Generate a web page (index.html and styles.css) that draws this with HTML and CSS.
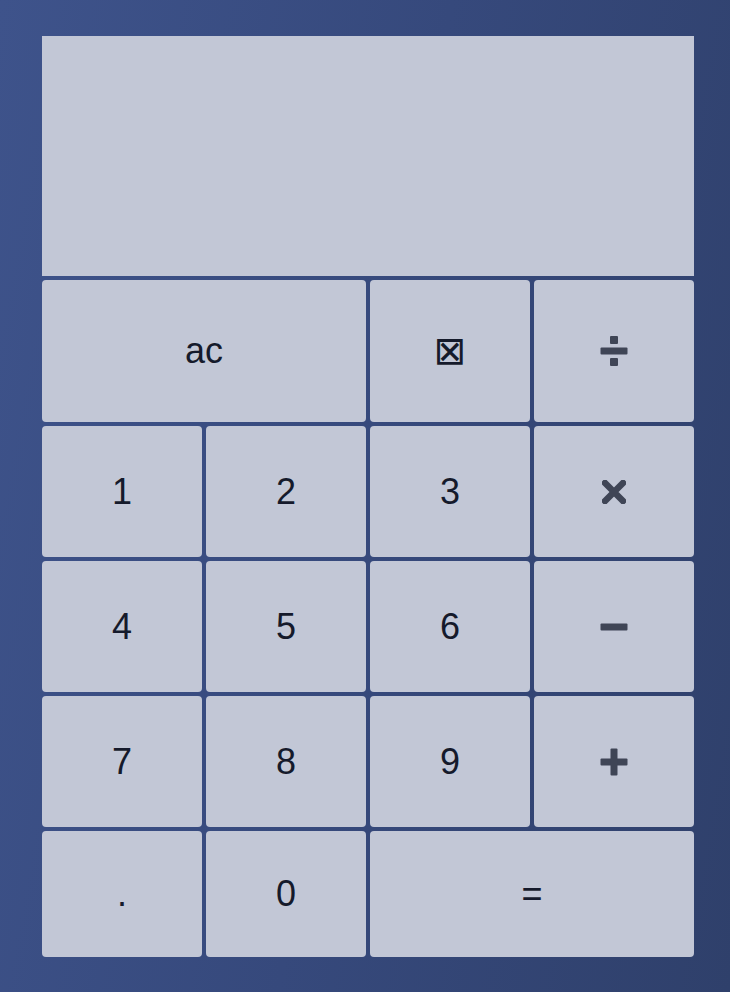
FILE: index.html
```html
<!DOCTYPE html>
<html lang="en">
<head>
    <meta charset="UTF-8">
    <meta name="viewport" content="width=device-width, initial-scale=1.0">
    <title>Calculator</title>
    <link rel="stylesheet" href="styles.css">
</head>
<body>
    <div class="calculator">
        <div class="display" id="display"></div>
        <div class="keys">
            <button class="key wide" data-action="clear">ac</button>
            <button class="key symbol" data-action="delete">&#8864;</button>
            <button class="key op" data-op="/" aria-label="divide">
                <svg width="28" height="30" viewBox="0 0 28 30">
                    <rect x="10" y="0" width="8" height="8" rx="1"/>
                    <rect x="0.5" y="11.5" width="27" height="7" rx="1"/>
                    <rect x="10" y="22" width="8" height="8" rx="1"/>
                </svg>
            </button>

            <button class="key">1</button>
            <button class="key">2</button>
            <button class="key">3</button>
            <button class="key op" data-op="*" aria-label="multiply">
                <svg width="24" height="24" viewBox="0 0 24 24">
                    <path d="M3 3 L21 21 M21 3 L3 21" stroke-width="6.5" stroke-linecap="square"/>
                </svg>
            </button>

            <button class="key">4</button>
            <button class="key">5</button>
            <button class="key">6</button>
            <button class="key op" data-op="-" aria-label="subtract">
                <svg width="28" height="8" viewBox="0 0 28 8">
                    <rect x="0.5" y="0.5" width="27" height="7" rx="1"/>
                </svg>
            </button>

            <button class="key">7</button>
            <button class="key">8</button>
            <button class="key">9</button>
            <button class="key op" data-op="+" aria-label="add">
                <svg width="28" height="28" viewBox="0 0 28 28">
                    <rect x="0.5" y="10.5" width="27" height="7" rx="1"/>
                    <rect x="10.5" y="0.5" width="7" height="27" rx="1"/>
                </svg>
            </button>

            <button class="key">.</button>
            <button class="key">0</button>
            <button class="key wide" data-action="equals">=</button>
        </div>
    </div>
</body>
</html>
```

FILE: styles.css
```css
* {
    margin: 0;
    padding: 0;
    box-sizing: border-box;
    font-family: "Liberation Sans", Arial, sans-serif;
}

body {
    min-height: 100vh;
    background: linear-gradient(100deg, #3e538b 0%, #36497c 50%, #2f406b 100%);
    padding: 36px 36px 0 42px;
}

.calculator {
    width: 652px;
    display: flex;
    flex-direction: column;
    gap: 4px;
}

.display {
    height: 240px;
    background-color: #c2c7d6;
}

.keys {
    display: grid;
    grid-template-columns: repeat(4, 160px);
    grid-template-rows: 142px 131px 131px 131px 126px;
    gap: 4px;
}

.key {
    display: flex;
    justify-content: center;
    align-items: center;
    border: none;
    border-radius: 4px;
    background-color: #c2c7d6;
    color: #151a2b;
    font-size: 36px;
    cursor: pointer;
}

.key.wide {
    grid-column: span 2;
}

.key.symbol {
    font-family: "DejaVu Sans", sans-serif;
    font-size: 39px;
    padding-bottom: 1px;
}

.key.op svg {
    fill: #3f4556;
    stroke: #3f4556;
}

.key.op svg rect {
    stroke: none;
}
```
